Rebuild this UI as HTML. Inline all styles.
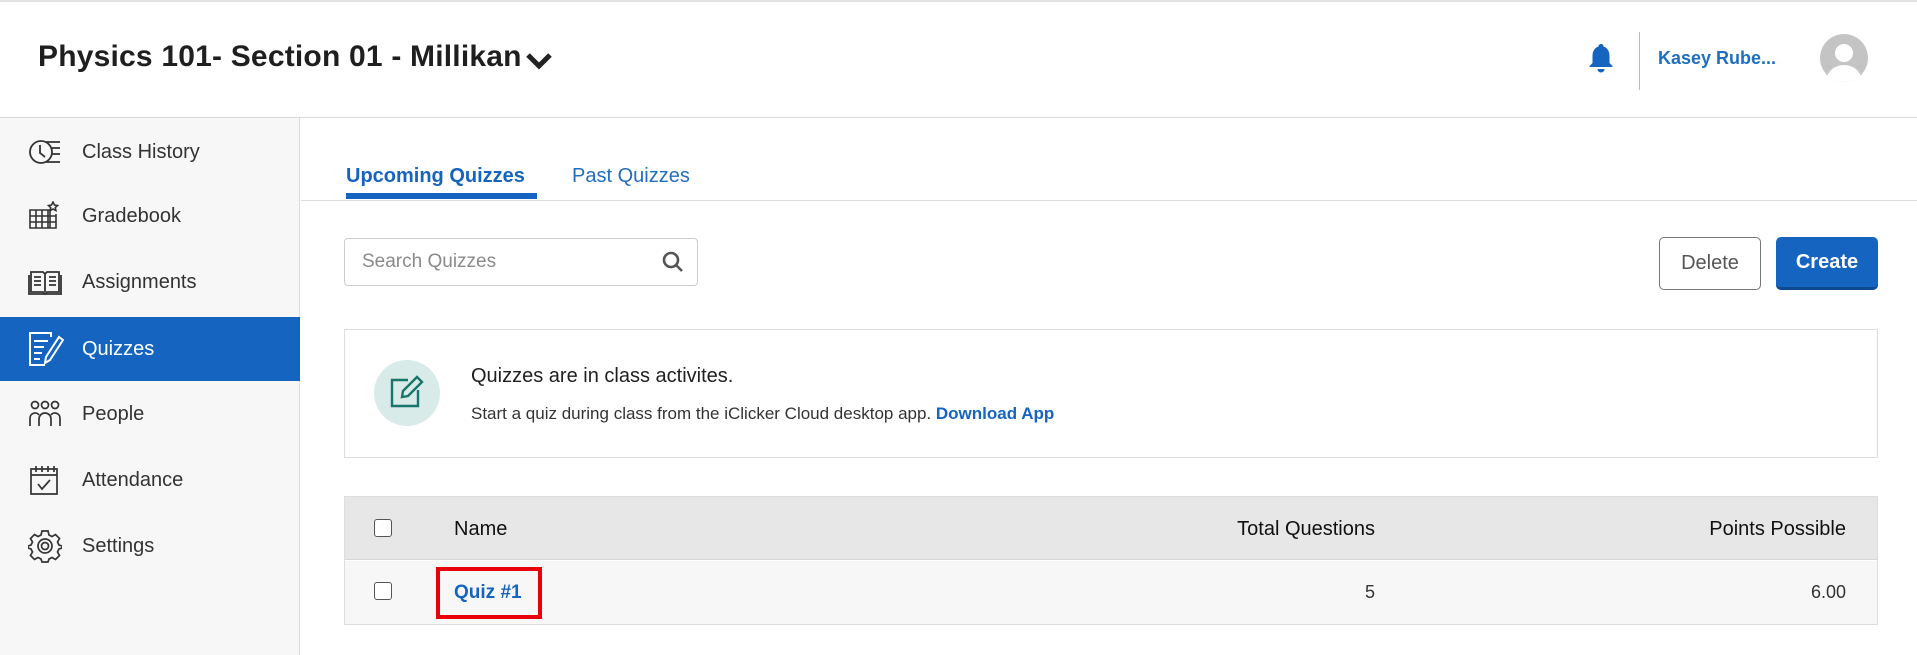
<!DOCTYPE html>
<html><head><meta charset="utf-8"><style>
*{box-sizing:border-box;margin:0;padding:0}
body{width:1917px;height:655px;overflow:hidden;background:#fff;font-family:"Liberation Sans",sans-serif;color:#222;position:relative}
.abs{position:absolute}
#top{left:0;top:0;width:1917px;height:118px;border-top:2px solid #e2e2e2;border-bottom:1px solid #d8d8d8;background:#fff}
#side{left:0;top:118px;width:300px;height:537px;background:#f7f7f7;border-right:1px solid #ddd}
.item{position:absolute;left:0;width:300px;height:64px;display:flex;align-items:center;font-size:20px;color:#333}
.item svg{position:absolute;left:28px}
.item span{position:absolute;left:82px}
.item.act{background:#1565c0;color:#fff}
.tab{font-size:20px;top:165px}
.cb{position:absolute;width:18px;height:18px;border:1.5px solid #555;border-radius:3px;background:#fff}
</style></head><body>
<div id="top" class="abs">
 <div class="abs" style="left:38px;top:38px;font-size:30px;font-weight:bold;color:#1f1f1f;letter-spacing:0.2px">Physics 101- Section 01 - Millikan</div>
 <svg class="abs" style="left:525px;top:49px" width="28" height="20" viewBox="0 0 28 20"><path d="M3 4 L14 15 L25 4" stroke="#222" stroke-width="5" fill="none"/></svg>
 <svg class="abs" style="left:1588px;top:40px" width="26" height="32" viewBox="0 0 26 32"><path d="M13 2c-1.5 0-2.5 1-2.5 2.5C6 6 4.5 10 4.5 14v7l-3 3v1h23v-1l-3-3v-7c0-4-1.5-8-6-9.5C15.5 3 14.5 2 13 2z" fill="#1565c0"/><path d="M9.5 27a3.5 3.5 0 0 0 7 0z" fill="#1565c0"/></svg>
 <div class="abs" style="left:1639px;top:30px;width:1px;height:58px;background:#bbb"></div>
 <div class="abs" style="left:1658px;top:46px;font-size:18px;font-weight:bold;color:#1f6fc0">Kasey Rube...</div>
 <svg class="abs" style="left:1820px;top:32px" width="48" height="48" viewBox="0 0 48 48"><defs><clipPath id="c"><circle cx="24" cy="24" r="24"/></clipPath></defs><circle cx="24" cy="24" r="24" fill="#c4c4c4"/><g clip-path="url(#c)" fill="#fff"><circle cx="24" cy="19" r="9"/><ellipse cx="24" cy="45" rx="17" ry="14"/></g></svg>
</div>
<div id="side" class="abs">
 <div class="item" style="top:2px"><svg width="34" height="28" viewBox="0 0 34 28" fill="none" stroke="#333" stroke-width="1.8"><circle cx="13" cy="14" r="11"/><path d="M12 7v8l5 4M18 4h14M24 10h8M24 16h8M18 24h14"/></svg><span>Class History</span></div>
 <div class="item" style="top:66px"><svg width="32" height="30" viewBox="0 0 32 30" fill="none" stroke="#333" stroke-width="1.6"><path d="M2 9h20v18H2zM2 15h26M2 21h26M8 9v18M14 9v18M20 9v18M28 13v14H20"/><path d="M25 1l1.5 3 3 .5-2.2 2 .6 3-2.9-1.5-2.8 1.5.5-3-2.2-2 3-.5z"/></svg><span>Gradebook</span></div>
 <div class="item" style="top:132px"><svg width="34" height="28" viewBox="0 0 34 28" fill="none" stroke="#333" stroke-width="1.8"><path d="M3 4h12l2 2 2-2h12v20H19l-2 2-2-2H3zM17 6v18M1 7v19h32V7M6 9h7M6 13h7M6 17h7M21 9h7M21 13h7M21 17h7"/></svg><span>Assignments</span></div>
 <div class="item act" style="top:199px"><svg width="36" height="36" viewBox="0 0 36 36" fill="none" stroke="#fff" stroke-width="2"><path d="M23 6V2H2v32h15M6 10h14M6 16h10M6 22h8M6 28h6M31 6l4 3-13 20-5 3 1-6z"/></svg><span>Quizzes</span></div>
 <div class="item" style="top:264px"><svg width="34" height="30" viewBox="0 0 34 30" fill="none" stroke="#333" stroke-width="1.7"><circle cx="7" cy="6" r="3.5"/><circle cx="17" cy="6" r="3.5"/><circle cx="27" cy="6" r="3.5"/><path d="M2 27v-8a5 5 0 0 1 9-3M32 27v-8a5 5 0 0 0-9-3M11 27v-7a6 6 0 0 1 12 0v7"/></svg><span>People</span></div>
 <div class="item" style="top:330px"><svg width="32" height="32" viewBox="0 0 32 32" fill="none" stroke="#333" stroke-width="1.7"><path d="M3 5h26v25H3zM3 11h26M8 2v6M14 2v6M20 2v6M26 2v6M10 20l4 5 8-9"/></svg><span>Attendance</span></div>
 <div class="item" style="top:396px"><svg width="34" height="34" viewBox="0 0 34 34" fill="none" stroke="#333" stroke-width="1.7"><path d="M14 2h6l1 4 3 1.5 3.5-2 4 4-2 3.5L31 16l3 1v2l-3 1-1.5 3 2 3.5-4 4-3.5-2L21 30l-1 3h-6l-1-3-3-1.5-3.5 2-4-4 2-3.5L3 20l-3-1v-2l3-1 1.5-3-2-3.5 4-4 3.5 2L13 6z"/><circle cx="17" cy="17" r="7"/><circle cx="17" cy="17" r="3.5"/></svg><span>Settings</span></div>
</div>
<div class="abs tab" style="left:346px;font-weight:bold;color:#1565c0">Upcoming Quizzes</div>
<div class="abs" style="left:346px;top:193px;width:191px;height:6px;background:#1565c0"></div>
<div class="abs tab" style="left:572px;color:#1f6fc0">Past Quizzes</div>
<div class="abs" style="left:301px;top:200px;width:1616px;height:1px;background:#ddd"></div>
<div class="abs" style="left:344px;top:238px;width:354px;height:48px;border:1px solid #ccc;border-radius:4px"></div>
<div class="abs" style="left:362px;top:251px;font-size:19px;color:#8a8a8a">Search Quizzes</div>
<svg class="abs" style="left:661px;top:250px" width="24" height="24" viewBox="0 0 24 24" fill="none" stroke="#555" stroke-width="2.6"><circle cx="10" cy="10" r="7"/><path d="M15 15l6 6"/></svg>
<div class="abs" style="left:1659px;top:237px;width:102px;height:53px;border:1px solid #777;border-radius:5px;font-size:20px;color:#555;display:flex;align-items:center;justify-content:center">Delete</div>
<div class="abs" style="left:1776px;top:237px;width:102px;height:53px;background:#1565c0;border-bottom:3px solid #0d4a8f;border-radius:5px;font-size:20px;font-weight:bold;color:#fff;display:flex;align-items:center;justify-content:center">Create</div>
<div class="abs" style="left:344px;top:329px;width:1534px;height:129px;border:1px solid #ddd"></div>
<div class="abs" style="left:374px;top:360px;width:66px;height:66px;border-radius:50%;background:#d8ebe9"></div>
<svg class="abs" style="left:388px;top:374px" width="38" height="38" viewBox="0 0 38 38" fill="none" stroke="#17756b" stroke-width="2.4"><path d="M20 6H4v26h26V16"/><path d="M29 3l5 5-14 14-6 1 1-6z"/></svg>
<div class="abs" style="left:471px;top:365px;font-size:20px;color:#1f1f1f">Quizzes are in class activites.</div>
<div class="abs" style="left:471px;top:404px;font-size:17px;color:#333">Start a quiz during class from the iClicker Cloud desktop app. <b style="color:#1565c0">Download App</b></div>
<div class="abs" style="left:344px;top:496px;width:1534px;height:129px;border:1px solid #ddd"></div>
<div class="abs" style="left:345px;top:497px;width:1532px;height:63px;background:#e7e7e7;border-bottom:1px solid #d6d6d6"></div>
<div class="abs" style="left:345px;top:561px;width:1532px;height:63px;background:#f7f7f7"></div>
<div class="cb" style="left:374px;top:519px"></div>
<div class="cb" style="left:374px;top:582px"></div>
<div class="abs" style="left:454px;top:518px;font-size:20px;color:#111">Name</div>
<div class="abs" style="right:542px;top:518px;font-size:20px;color:#111">Total Questions</div>
<div class="abs" style="right:71px;top:518px;font-size:20px;color:#111">Points Possible</div>
<div class="abs" style="left:436px;top:567px;width:106px;height:52px;border:4px solid #e8000b"></div>
<div class="abs" style="left:454px;top:582px;font-size:19px;font-weight:bold;color:#1565c0">Quiz #1</div>
<div class="abs" style="right:542px;top:582px;font-size:18px;color:#333">5</div>
<div class="abs" style="right:71px;top:582px;font-size:18px;color:#333">6.00</div>
</body></html>
